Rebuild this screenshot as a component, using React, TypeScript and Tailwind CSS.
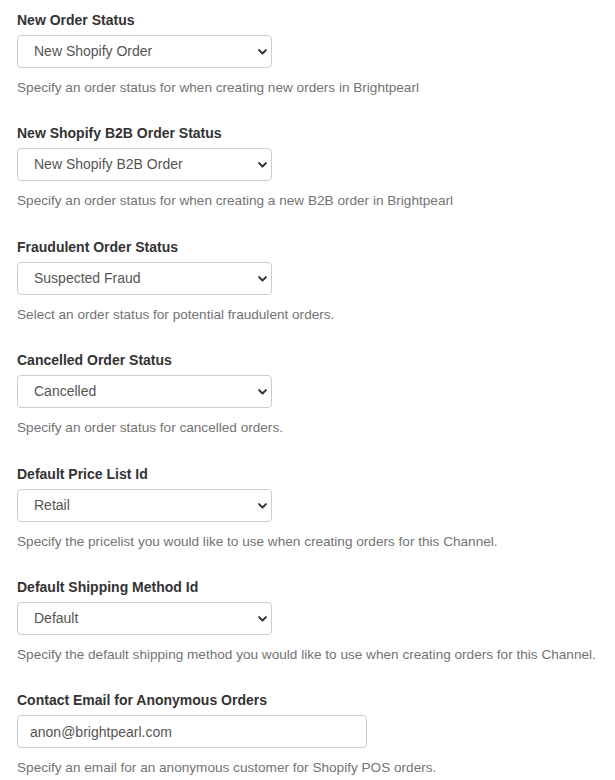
const selects = [
  {
    label: "New Order Status",
    value: "New Shopify Order",
    help: "Specify an order status for when creating new orders in Brightpearl",
  },
  {
    label: "New Shopify B2B Order Status",
    value: "New Shopify B2B Order",
    help: "Specify an order status for when creating a new B2B order in Brightpearl",
  },
  {
    label: "Fraudulent Order Status",
    value: "Suspected Fraud",
    help: "Select an order status for potential fraudulent orders.",
  },
  {
    label: "Cancelled Order Status",
    value: "Cancelled",
    help: "Specify an order status for cancelled orders.",
  },
  {
    label: "Default Price List Id",
    value: "Retail",
    help: "Specify the pricelist you would like to use when creating orders for this Channel.",
  },
  {
    label: "Default Shipping Method Id",
    value: "Default",
    help: "Specify the default shipping method you would like to use when creating orders for this Channel.",
  },
];

function Chevron() {
  return (
    <svg width="9" height="6" viewBox="0 0 9 6" className="pointer-events-none absolute right-[5px] top-[14px]">
      <path d="M1.1 1.1 L4.5 4.5 L7.9 1.1" fill="none" stroke="#333" strokeWidth="2" strokeLinecap="round" strokeLinejoin="round" />
    </svg>
  );
}

export default function App() {
  return (
    <div className="min-h-screen bg-white pl-[17px] pt-[10px] font-['Liberation_Sans',Arial,sans-serif]">
      {selects.map((s) => (
        <div key={s.label} className="mb-[25.4px]">
          <label className="block text-[14px] font-bold leading-5 text-[#333]">{s.label}</label>
          <div className="relative mt-[5px] w-[255px]">
            <select
              defaultValue={s.value}
              className="h-[33px] w-full appearance-none rounded-[4px] border border-[#ccc] bg-white pl-4 pr-6 text-[14px] text-[#555] outline-none"
            >
              <option>{s.value}</option>
            </select>
            <Chevron />
          </div>
          <p className="mt-[10px] text-[13.6px] leading-5 text-[#737373]">{s.help}</p>
        </div>
      ))}
      <div>
        <label className="block text-[14px] font-bold leading-5 text-[#333]">Contact Email for Anonymous Orders</label>
        <input
          type="text"
          defaultValue="anon@brightpearl.com"
          className="mt-[5px] h-[33px] w-[350px] rounded-[4px] border border-[#ccc] bg-white px-3 text-[14px] text-[#555] outline-none"
        />
        <p className="mt-[10px] text-[13.6px] leading-5 text-[#737373]">
          Specify an email for an anonymous customer for Shopify POS orders.
        </p>
      </div>
    </div>
  );
}
